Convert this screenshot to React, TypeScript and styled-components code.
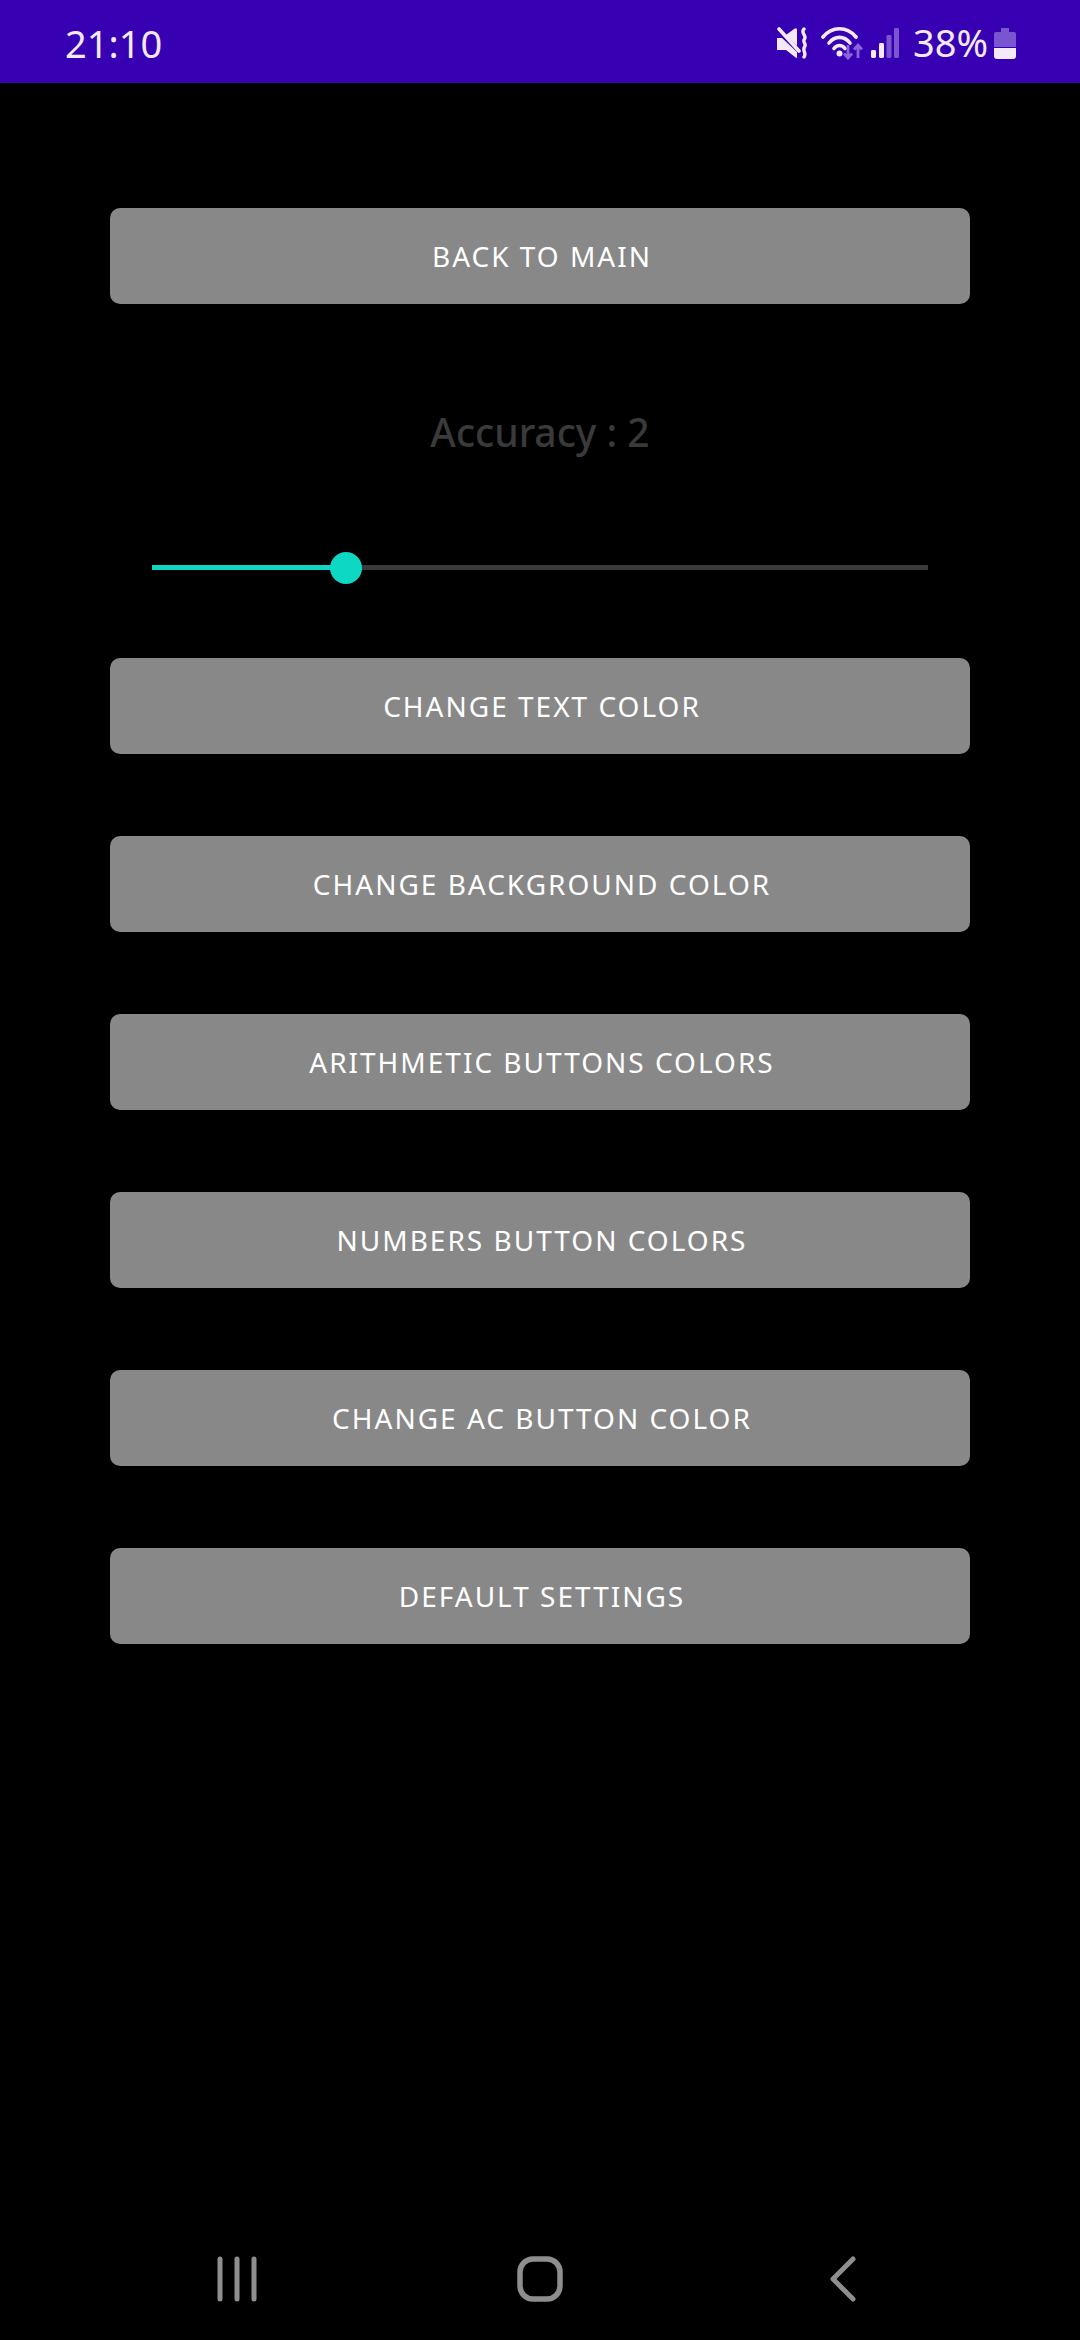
import styled, { createGlobalStyle } from "styled-components";

const GlobalStyle = createGlobalStyle`
  html, body {
    margin: 0;
    padding: 0;
    background: #000;
    font-family: "Noto Sans", "Open Sans", sans-serif;
  }
`;

const LABELS = [
  "CHANGE TEXT COLOR",
  "CHANGE BACKGROUND COLOR",
  "ARITHMETIC BUTTONS COLORS",
  "NUMBERS BUTTON COLORS",
  "CHANGE AC BUTTON COLOR",
  "DEFAULT SETTINGS",
];

const SLIDER_PERCENT = 25;

export default function App() {
  return (
    <>
      <GlobalStyle />
      <Page>
        <StatusBar>
          <Clock>21:10</Clock>
          <StatusIcons>
            <StatusItem><MuteIcon /></StatusItem>
            <StatusItem $gap={13}><WifiIcon /></StatusItem>
            <StatusItem $gap={8}><SignalIcon /></StatusItem>
            <StatusItem $gap={14}><BatteryText>38%</BatteryText></StatusItem>
            <StatusItem $gap={6}><BatteryIcon /></StatusItem>
          </StatusIcons>
        </StatusBar>

        <Content>
          <ActionButton>BACK TO MAIN</ActionButton>
          <AccuracyLabel>Accuracy : 2</AccuracyLabel>
          <Slider>
            <SliderFill style={{ width: `${SLIDER_PERCENT}%` }} />
            <SliderThumb style={{ left: `${SLIDER_PERCENT}%` }} />
          </Slider>
          <ButtonList>
            {LABELS.map((label) => (
              <ActionButton key={label}>{label}</ActionButton>
            ))}
          </ButtonList>
        </Content>

        <NavBar>
          <RecentsIcon />
          <HomeIcon />
          <BackIcon />
        </NavBar>
      </Page>
    </>
  );
}

const MuteIcon = () => (
  <IconSvg width="32" height="32" viewBox="0 0 32 32">
    <path d="M1 11 H6 L21 25 V30 Q21 32 19 30 L10 23 H1 Z" fill="#f3e9fb" />
    <path d="M10 8 L18 2 Q21 0 21 3 V19 Z" fill="#f3e9fb" />
    <path d="M3 2 L23 24" stroke="#f3e9fb" strokeWidth="3.6" strokeLinecap="round" />
    <path
      d="M28 2 C24 6 31 8 28.5 12 C26 15 31 17 28.5 20 C26 24 31 26 28 30"
      fill="none"
      stroke="#f3e9fb"
      strokeWidth="3.4"
      strokeLinecap="round"
    />
  </IconSvg>
);

const WifiIcon = () => (
  <IconSvg width="42" height="34" viewBox="0 0 42 34">
    <g fill="none" stroke="#f3e9fb" strokeWidth="3.6" strokeLinecap="round">
      <path d="M2 11 C11 0 26 0 35 11" />
      <path d="M8 17 C14 9.5 23 9.5 29 17" />
      <path d="M13 22.5 C16 18.5 21 18.5 24 22.5" />
    </g>
    <circle cx="18.5" cy="27.5" r="3" fill="#f3e9fb" />
    <g fill="none" stroke="#8a64d8" strokeWidth="2.8">
      <path d="M27 19 V32 M23 27.5 L27 32 L31 27.5" />
      <path d="M37 32 V19 M33 23.5 L37 19 L41 23.5" />
    </g>
  </IconSvg>
);

const SignalIcon = () => (
  <IconSvg width="28" height="32" viewBox="0 0 28 32">
    <rect x="0" y="23" width="5" height="8" rx="1.4" fill="#f3e9fb" />
    <rect x="8" y="16" width="5" height="15" rx="1.4" fill="#f3e9fb" />
    <rect x="15.5" y="8" width="5" height="23" rx="1.4" fill="#7a55d0" />
    <rect x="23" y="1" width="5" height="30" rx="1.4" fill="#7a55d0" />
  </IconSvg>
);

const BatteryIcon = () => (
  <IconSvg width="22" height="32" viewBox="0 0 22 32">
    <path d="M7 1 H15 V5 H20 Q22 5 22 7 V20 H0 V7 Q0 5 2 5 H7 Z" fill="#7a55d0" />
    <path d="M0 21 H22 V29 Q22 32 19 32 H3 Q0 32 0 29 Z" fill="#f3e9fb" />
  </IconSvg>
);

const RecentsIcon = () => (
  <svg width="40" height="46" viewBox="0 0 40 46">
    <g stroke="#8e8e8e" strokeWidth="5" strokeLinecap="round">
      <path d="M3 3 V43" />
      <path d="M20 3 V43" />
      <path d="M37 3 V43" />
    </g>
  </svg>
);

const HomeIcon = () => (
  <svg width="46" height="46" viewBox="0 0 46 46">
    <rect x="3" y="3" width="40" height="40" rx="13" fill="none" stroke="#8e8e8e" strokeWidth="5.5" />
  </svg>
);

const BackIcon = () => (
  <svg width="26" height="46" viewBox="0 0 26 46">
    <path
      d="M23 3 L3 23 L23 43"
      fill="none"
      stroke="#8e8e8e"
      strokeWidth="5"
      strokeLinecap="round"
      strokeLinejoin="round"
    />
  </svg>
);

const IconSvg = styled.svg`
  display: block;
`;

const Page = styled.div`
  width: 1080px;
  height: 2340px;
  background: #000;
  display: flex;
  flex-direction: column;
  overflow: hidden;
`;

const StatusBar = styled.div`
  height: 83px;
  flex: none;
  box-sizing: border-box;
  background: #3700b3;
  display: flex;
  align-items: center;
  justify-content: space-between;
  padding: 2px 64px 0 65px;
  color: #f3e9fb;
`;

const Clock = styled.span`
  font-size: 38px;
  line-height: 1;
`;

const StatusIcons = styled.div`
  display: flex;
  align-items: center;
`;

const StatusItem = styled.span<{ $gap?: number }>`
  display: block;
  margin-left: ${(p) => p.$gap ?? 0}px;
`;

const BatteryText = styled.span`
  font-size: 38px;
  line-height: 1;
`;

const Content = styled.div`
  flex: 1;
  padding: 125px 110px 0;
  display: flex;
  flex-direction: column;
`;

const ActionButton = styled.div`
  height: 96px;
  flex: none;
  box-sizing: border-box;
  padding-left: 4px;
  border-radius: 10px;
  background: #888888;
  color: #fff;
  display: flex;
  align-items: center;
  justify-content: center;
  font-size: 28px;
  letter-spacing: 2px;
`;

const AccuracyLabel = styled.div`
  margin-top: 98px;
  height: 60px;
  line-height: 60px;
  text-align: center;
  color: #3a3a3a;
  font-size: 39px;
  font-weight: 500;
`;

const Slider = styled.div`
  position: relative;
  margin: 103px 42px 0;
  height: 5px;
  background: #3a3a3a;
`;

const SliderFill = styled.div`
  height: 100%;
  background: #0dd8c3;
`;

const SliderThumb = styled.div`
  position: absolute;
  top: 50%;
  width: 32px;
  height: 32px;
  border-radius: 50%;
  background: #0dd8c3;
  transform: translate(-50%, -50%);
`;

const ButtonList = styled.div`
  margin-top: 88px;
  display: flex;
  flex-direction: column;
  gap: 82px;
`;

const NavBar = styled.div`
  height: 144px;
  flex: none;
  box-sizing: border-box;
  display: grid;
  grid-template-columns: repeat(3, 1fr);
  justify-items: center;
  padding: 60px 86px 0;
`;
